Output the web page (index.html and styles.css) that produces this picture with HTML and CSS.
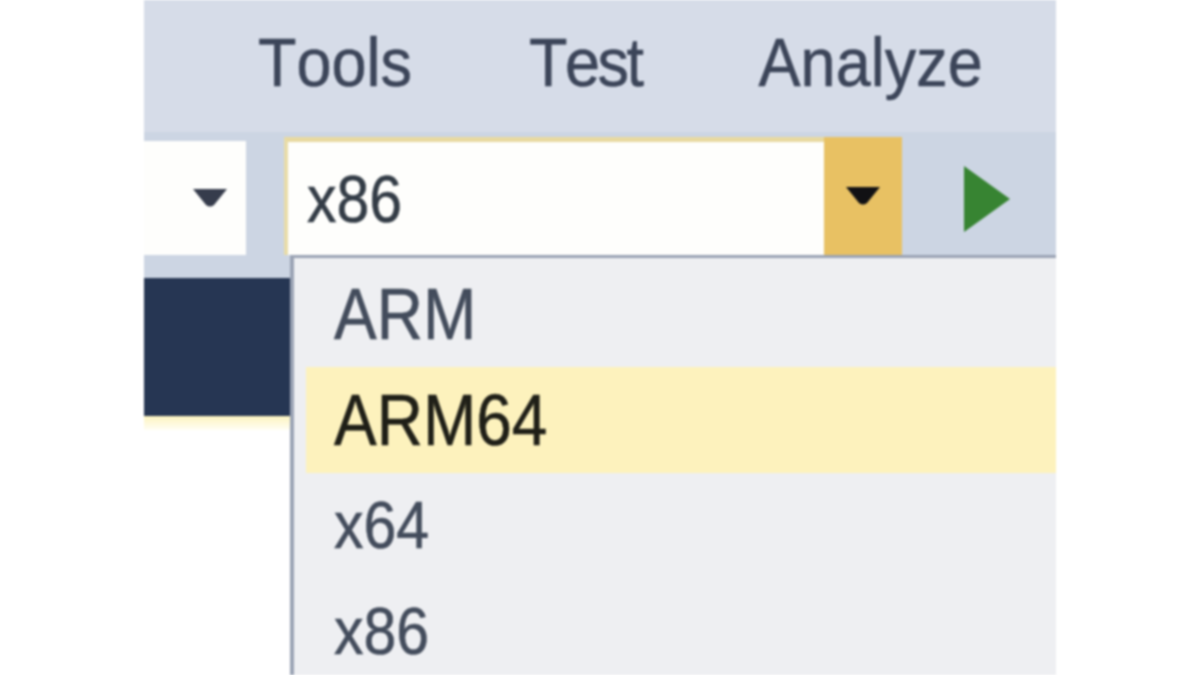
FILE: index.html
```html
<!DOCTYPE html>
<html lang="en">
<head>
  <meta charset="UTF-8">
  <title>Solution Platforms</title>
  <link rel="stylesheet" href="styles.css">
</head>
<body>

  <div class="window">
    <div class="menubar">
      <span class="menu-item">Tools</span>
      <span class="menu-item menu-item-tight">Test</span>
      <span class="menu-item">Analyze</span>
    </div>

    <div class="toolbar">
      <div class="combo combo-config">
        <svg class="arrow arrow-muted" viewBox="0 0 34 18"><path d="M0 0H34L21 16Q17 19 13 16Z"/></svg>
      </div>

      <div class="combo combo-platform">
        <div class="combo-value"><span class="label">x86</span></div>
        <div class="combo-button">
          <svg class="arrow" viewBox="0 0 34 18"><path d="M0 0H34L21 16Q17 19 13 16Z"/></svg>
        </div>

        <div class="dropdown-menu">
          <div class="dropdown-option"><span class="label label-caps">ARM</span></div>
          <div class="dropdown-option selected"><span class="label label-caps">ARM64</span></div>
          <div class="dropdown-option"><span class="label">x64</span></div>
          <div class="dropdown-option"><span class="label">x86</span></div>
        </div>
      </div>

      <svg class="play" viewBox="0 0 47 66"><path d="M1 0L47 33L1 66Z"/></svg>
    </div>

    <div class="tabstrip"></div>
    <div class="tabline"></div>
    <div class="editor"></div>
  </div>

</body>
</html>
```

FILE: styles.css
```css
body {
  margin: 0;
  background-color: white;
  font-family: "Liberation Sans", Arial, sans-serif;
  font-kerning: none;
  -webkit-text-stroke: 0.5px;
  overflow: hidden;
}

/* the reference is an upscaled small capture, hence the slight blur */
.window {
  width: 912px;
  height: 675px;
  margin: 0 auto;
  display: flex;
  flex-direction: column;
  overflow: hidden;
  filter: blur(0.8px);
}

.label {
  display: inline-block;
  transform: scaleY(1.12);
  line-height: 1;
}

.menubar {
  height: 132px;
  flex-shrink: 0;
  display: flex;
  align-items: center;
  gap: 117px;
  padding-left: 114px;
  background-color: #d6dce8;
  color: #3c4559;
  font-size: 63px;
}

.menu-item {
  position: relative;
  top: -4px;
  transform: scaleY(1.1);
}

.menu-item-tight {
  letter-spacing: -2.5px;
}

.toolbar {
  height: 146px;
  flex-shrink: 0;
  display: flex;
  align-items: flex-start;
  background-color: #ccd5e3;
}

.combo {
  display: flex;
  background-color: #fefefc;
}

.combo-config {
  width: 102px;
  height: 114px;
  margin-top: 9px;
  align-items: center;
  justify-content: flex-end;
  padding-right: 19px;
  box-sizing: border-box;
}

.combo-platform {
  position: relative;
  width: 618px;
  height: 118px;
  margin-left: 38px;
  margin-top: 5px;
  box-sizing: border-box;
  border-top: 5px solid #e8d9a0;
  border-left: 4px solid #e8dca8;
}

.combo-value {
  flex: 1;
  padding-left: 19px;
  padding-top: 24px;
  font-size: 59px;
  color: #333c46;
}

.combo-button {
  width: 78px;
  margin-top: -5px;
  display: flex;
  align-items: center;
  justify-content: center;
  background-color: #e8c163;
}

.arrow {
  width: 34px;
  height: 18px;
  fill: #111114;
}

.arrow-muted {
  fill: #363c4c;
}

.play {
  width: 47px;
  height: 66px;
  margin-left: 61px;
  margin-top: 34px;
  fill: #378432;
}

.dropdown-menu {
  position: absolute;
  top: 113px;
  left: 2px;
  width: 770px;
  height: 425px;
  box-sizing: border-box;
  padding-top: 3px;
  padding-left: 12px;
  border-top: 3px solid #9aa3b4;
  border-left: 4px solid #9aa3b4;
  background-color: #eeeff2;
}

.dropdown-option {
  height: 106px;
  padding-left: 28px;
  display: flex;
  align-items: center;
  font-size: 59px;
  color: #434c5c;
}

.label-caps {
  font-size: 64px;
}

.dropdown-option.selected {
  background-color: #fdf2bd;
  color: #1f1f17;
}

.tabstrip {
  height: 138px;
  flex-shrink: 0;
  background-color: #263653;
}

.tabline {
  height: 14px;
  flex-shrink: 0;
  background: linear-gradient(#fdf4c0, #fffef4);
}

.editor {
  flex: 1;
  background-color: white;
}
```
